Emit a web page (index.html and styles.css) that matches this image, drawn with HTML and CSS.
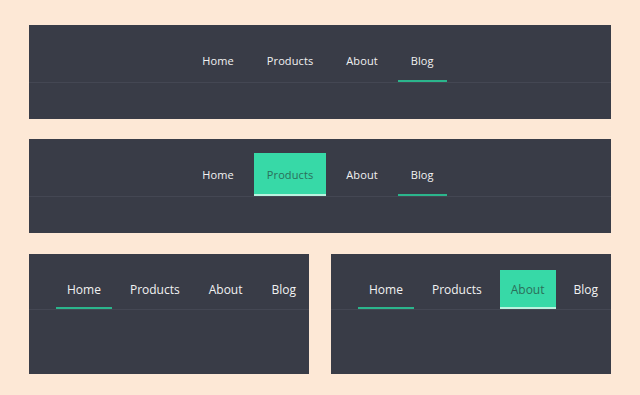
FILE: index.html
```html
<!DOCTYPE html>
<html lang="en">
<head>
    <meta charset="UTF-8">
    <meta name="viewport" content="width=device-width, initial-scale=1.0">
    <title>Navigation Menus</title>
    <link rel="stylesheet" href="styles.css">
</head>
<body>
    <div class="menu-grid">
        <div class="panel panel-wide">
            <ul class="nav nav-center">
                <li class="nav-item">Home</li>
                <li class="nav-item">Products</li>
                <li class="nav-item">About</li>
                <li class="nav-item current">Blog</li>
            </ul>
        </div>

        <div class="panel panel-wide">
            <ul class="nav nav-center">
                <li class="nav-item">Home</li>
                <li class="nav-item hover">Products</li>
                <li class="nav-item">About</li>
                <li class="nav-item current">Blog</li>
            </ul>
        </div>

        <div class="panel panel-small">
            <ul class="nav nav-left">
                <li class="nav-item current">Home</li>
                <li class="nav-item">Products</li>
                <li class="nav-item">About</li>
                <li class="nav-item">Blog</li>
            </ul>
        </div>

        <div class="panel panel-small">
            <ul class="nav nav-left">
                <li class="nav-item current">Home</li>
                <li class="nav-item">Products</li>
                <li class="nav-item hover">About</li>
                <li class="nav-item">Blog</li>
            </ul>
        </div>
    </div>
</body>
</html>
```

FILE: styles.css
```css
body {
    margin: 0;
    background-color: #fde8d6;
    font-family: 'Open Sans', 'Noto Sans', sans-serif;
}
.menu-grid {
    display: grid;
    grid-template-columns: 280px 280px;
    column-gap: 22px;
    row-gap: 20px;
    margin: 25px 29px;
    width: 582px;
}
.panel {
    background-color: #393c47;
    overflow: hidden;
}
.panel-wide {
    grid-column: 1 / 3;
    height: 94px;
}
.panel-small {
    height: 120px;
    margin-top: 1px;
}
.nav {
    list-style: none;
    margin: 0;
    display: flex;
    gap: 7px;
    border-bottom: 1px solid #444753;
}
.nav-center {
    justify-content: center;
    padding: 14px 4px 0 0;
}
.nav-left {
    padding: 16px 0 0 27px;
}
.nav-item {
    box-sizing: border-box;
    color: #f2f2f2;
    white-space: nowrap;
    border-bottom: 2px solid transparent;
}
.nav-center .nav-item {
    height: 43px;
    padding: 14px 13px 0;
    font-size: 11px;
    letter-spacing: 0.1px;
}
.nav-left .nav-item {
    height: 39px;
    padding: 11px 11px 0;
    font-size: 12px;
}
.nav-item.current {
    border-bottom-color: #2bb58c;
}
.nav-item.hover {
    background-color: #37d9a7;
    color: #2b6f5a;
    border-bottom-color: #b9f3df;
}
```
